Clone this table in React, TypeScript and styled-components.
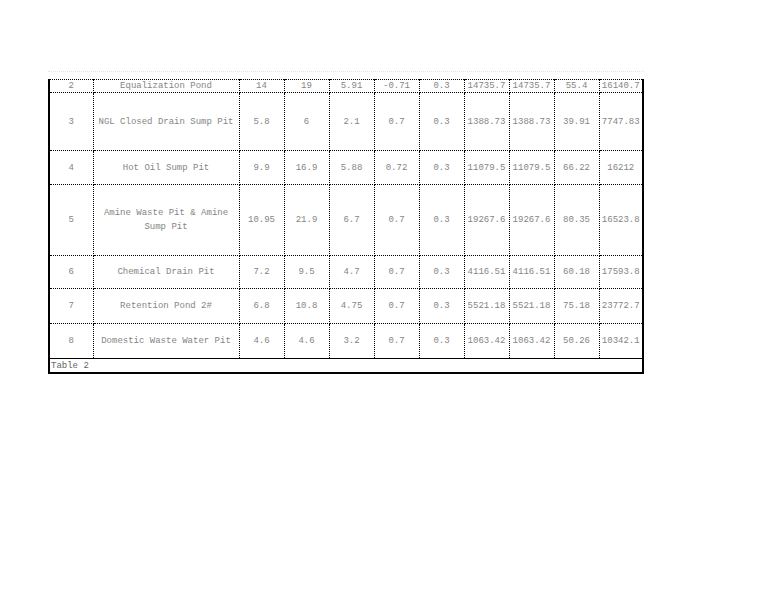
import styled, { createGlobalStyle } from "styled-components";

type Row = {
  no: string;
  name: string;
  values: string[];
  height: number;
};

const rows: Row[] = [
  { no: "2", name: "Equalization Pond", values: ["14", "19", "5.91", "-0.71", "0.3", "14735.7", "14735.7", "55.4", "16140.7"], height: 13 },
  { no: "3", name: "NGL Closed Drain Sump Pit", values: ["5.8", "6", "2.1", "0.7", "0.3", "1388.73", "1388.73", "39.91", "7747.83"], height: 58 },
  { no: "4", name: "Hot Oil Sump Pit", values: ["9.9", "16.9", "5.88", "0.72", "0.3", "11079.5", "11079.5", "66.22", "16212"], height: 34 },
  { no: "5", name: "Amine Waste Pit & Amine Sump Pit", values: ["10.95", "21.9", "6.7", "0.7", "0.3", "19267.6", "19267.6", "80.35", "16523.8"], height: 71 },
  { no: "6", name: "Chemical Drain Pit", values: ["7.2", "9.5", "4.7", "0.7", "0.3", "4116.51", "4116.51", "60.18", "17593.8"], height: 33 },
  { no: "7", name: "Retention Pond 2#", values: ["6.8", "10.8", "4.75", "0.7", "0.3", "5521.18", "5521.18", "75.18", "23772.7"], height: 35 },
  { no: "8", name: "Domestic Waste Water Pit", values: ["4.6", "4.6", "3.2", "0.7", "0.3", "1063.42", "1063.42", "50.26", "10342.1"], height: 34 },
];

const colWidths = [43, 146, 45, 45, 45, 45, 45, 45, 45, 45, 43];

export default function App() {
  return (
    <>
      <GlobalStyle />
      <Page>
        <FaintRule aria-hidden />
        <Frame>
          <Grid>
            <colgroup>
              {colWidths.map((w, i) => (
                <col key={i} style={{ width: w }} />
              ))}
            </colgroup>
            <tbody>
              {rows.map((r) => (
                <BodyRow key={r.no} $h={r.height}>
                  <Cell $h={r.height}>{r.no}</Cell>
                  <Cell $h={r.height}>{r.name}</Cell>
                  {r.values.map((v, i) => (
                    <Cell key={i} $h={r.height}>
                      {v}
                    </Cell>
                  ))}
                </BodyRow>
              ))}
            </tbody>
          </Grid>
          <Caption>Table 2</Caption>
        </Frame>
      </Page>
    </>
  );
}

const GlobalStyle = createGlobalStyle`
  html, body {
    margin: 0;
    padding: 0;
    background: #ffffff;
  }
`;

const Page = styled.div`
  padding: 71px 0 0 48px;
  width: 596px;
  font-family: "Liberation Mono", "DejaVu Sans Mono", monospace;
`;

const FaintRule = styled.div`
  height: 0;
  border-top: 1px dotted #e4e4e4;
  margin-bottom: 7px;
`;

const Frame = styled.div`
  border: 2px solid #000;
  border-top: none;
`;

const Grid = styled.table`
  width: 100%;
  table-layout: fixed;
  border-collapse: collapse;
  border-top: 1px dotted #000;

  tr:last-child td {
    border-bottom: none;
  }

  td:last-child {
    border-right: none;
  }
`;

const BodyRow = styled.tr<{ $h: number }>`
  height: ${({ $h }) => $h}px;
`;

const Cell = styled.td<{ $h: number }>`
  height: ${({ $h }) => $h}px;
  padding: 0 2px;
  box-sizing: border-box;
  border-right: 1px dotted #000;
  border-bottom: 1px dotted #000;
  text-align: center;
  vertical-align: middle;
  font-size: 9px;
  line-height: ${({ $h }) => ($h < 16 ? 11 : 14)}px;
  color: #858585;
  overflow: hidden;
`;

const Caption = styled.div`
  border-top: 1px solid #000;
  height: 13px;
  padding-left: 1px;
  font-size: 9px;
  line-height: 14px;
  color: #666;
`;
